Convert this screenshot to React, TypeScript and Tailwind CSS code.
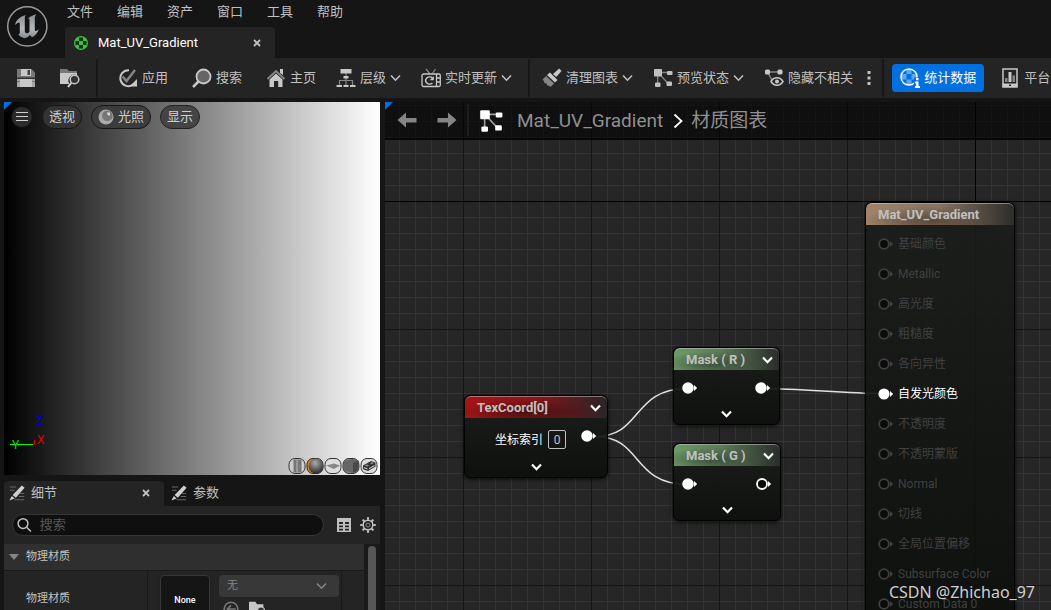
import { useState, type ReactNode } from "react";

const menus = ["文件", "编辑", "资产", "窗口", "工具", "帮助"];

const materialPins = [
  { name: "基础颜色" },
  { name: "Metallic" },
  { name: "高光度" },
  { name: "粗糙度" },
  { name: "各向异性" },
  { name: "自发光颜色", linked: true },
  { name: "不透明度" },
  { name: "不透明蒙版" },
  { name: "Normal" },
  { name: "切线" },
  { name: "全局位置偏移" },
  { name: "Subsurface Color" },
  { name: "Custom Data 0" },
];

function Chevron({ className = "w-[11px]", width = 1.6 }: { className?: string; width?: number }) {
  return (
    <svg viewBox="0 0 11 8" className={`shrink-0 ${className}`} fill="none" stroke="currentColor" strokeWidth={width}>
      <path d="M1 1.5 5.5 6.2 10 1.5" />
    </svg>
  );
}

function CloseIcon() {
  return (
    <svg viewBox="0 0 8 8" className="size-2" fill="none" stroke="currentColor" strokeWidth="1.8">
      <path d="M1 1l6 6M7 1L1 7" />
    </svg>
  );
}

function Icon({ children, className = "size-5" }: { children: ReactNode; className?: string }) {
  return (
    <svg viewBox="0 0 20 20" className={`shrink-0 ${className}`} fill="none">
      {children}
    </svg>
  );
}

function UnrealLogo() {
  return (
    <svg viewBox="6 5 42 42" className="size-[42px]" fill="none">
      <defs>
        <linearGradient id="metal" x1="0" y1="0" x2="0" y2="1">
          <stop offset="0" stopColor="#8b8f92" />
          <stop offset="0.6" stopColor="#b4b8ba" />
          <stop offset="1" stopColor="#85898c" />
        </linearGradient>
      </defs>
      <circle cx="27.300" cy="26.300" r="19.600" fill="#131313" stroke="#9a9a9a" strokeWidth="1.500" />
      <path
        d="M15 25 C16 20 20 16.500 25.800 15 C25 16 24.800 17 24.800 18.500 V31 C24.800 32.500 26 33.300 27 33.300 C28 33.300 29 32.500 29.500 31.500 V20 C29.500 18.700 28.800 18.500 27.600 18.900 C30 16.500 33 15 36.500 14.300 C35.200 15.800 34.800 17 34.800 19 V29.500 C34.800 31.600 36.300 31.500 38.800 29.300 C37.500 33 35 36 32 37.300 L29.800 35 C28.500 36.800 26.800 38 24.500 38.200 C21.500 37.500 19.500 36 18.300 34.500 C19.500 34 19.800 33.500 19.800 32 V23.700 C19.800 21.800 18.200 22 15 25 Z"
        fill="url(#metal)"
      />
    </svg>
  );
}

function MaterialIcon() {
  return (
    <svg viewBox="0 0 14 14" className="size-[14px]">
      <clipPath id="ball">
        <circle cx="7" cy="7" r="7" />
      </clipPath>
      <g clipPath="url(#ball)">
        <rect width="14" height="14" fill="#3fbf3f" />
        <path d="M5 1.500h4v3.500H5zM1.500 5H5v4H1.500zM9 5h3.500v4H9zM5 9h4v3.500H5z" fill="#12301a" />
        <path d="M5 5h4v4H5z" fill="#3fbf3f" />
      </g>
    </svg>
  );
}

const SaveIcon = () => (
  <Icon>
    <path d="M1 1h14.500L19 4.500V19H1z" fill="#777" />
    <path d="M5 1h10v7H5zM4 11h12v8H4z" fill="#c8c8c8" />
    <path d="M11.500 2h2.500v5h-2.500z" fill="#444" />
    <path d="M1 9.500h18V11H1z" fill="#333" />
    <path d="M1 11h18v2H1zM1 14h18v5H1z" fill="#c8c8c8" fillOpacity="0.600" />
  </Icon>
);

const BrowseIcon = () => (
  <Icon>
    <path d="M0 2V1h7l2 2h8v3H0z" fill="#777" />
    <path d="M0 5h17v2.200A6 6 0 0 0 9.500 16H0z" fill="#c8c8c8" />
    <circle cx="14.500" cy="11.500" r="4.300" fill="#333" stroke="#c8c8c8" strokeWidth="1.500" />
    <path d="M11.500 14.700 8 19" stroke="#c8c8c8" strokeWidth="2" />
  </Icon>
);

const ApplyIcon = () => (
  <Icon>
    <path d="M11 2.200A8 8 0 1 0 15.500 16.300" stroke="#c8c8c8" strokeWidth="2" />
    <path d="M19 11v7.500h-7.500z" fill="#c8c8c8" />
    <path d="M4.500 8.500l4 4.500L17 2" stroke="#858585" strokeWidth="2.500" />
  </Icon>
);

const FindIcon = () => (
  <Icon>
    <circle cx="11.500" cy="8.500" r="7" fill="#666" stroke="#c8c8c8" strokeWidth="1.800" />
    <path d="M6.500 13.500 1 19" stroke="#c8c8c8" strokeWidth="2.500" />
  </Icon>
);

const HomeIcon = () => (
  <Icon>
    <path d="M14 1h3v6l-3-2z" fill="#c8c8c8" />
    <path d="M1.500 11 10 3l8.500 8" stroke="#858585" strokeWidth="2" />
    <path d="M3.500 11.500 10 5.500l6.500 6V19h-4.300v-6H8v6H3.500z" fill="#c8c8c8" />
  </Icon>
);

const HierarchyIcon = () => (
  <Icon>
    <path d="M10 5v12M3.500 17v-4.500h13V17" stroke="#858585" strokeWidth="1.200" />
    <path d="M4.500 1h11v4.500h-11zM7.500 8h5v2.500h-5zM.5 17H6v2H.5zM7.500 17h5v2h-5zM14 17h5.500v2H14z" fill="#c8c8c8" />
  </Icon>
);

const LiveIcon = () => (
  <Icon>
    <path d="M5 1l4 5M14.500 1 11 6" stroke="#858585" strokeWidth="1.300" />
    <rect x="1" y="6" width="18.300" height="12.500" rx="1.500" stroke="#c8c8c8" strokeWidth="1.300" />
    <path d="M15.500 6v12.500M15.500 10h4M15.500 14h4" stroke="#c8c8c8" strokeWidth="1.300" />
    <path d="M11.500 10A4 3.600 0 1 0 11.500 15" stroke="#c8c8c8" strokeWidth="1.500" />
    <path d="M12.800 8v4.200H8.700z" fill="#c8c8c8" />
  </Icon>
);

const CleanIcon = () => (
  <Icon>
    <path d="M17.200.6 19.500 3l-5.300 6-3.200-3z" fill="#c8c8c8" />
    <path d="M8 4.500 15.500 12l-2.500 2.500L5 7z" fill="#c8c8c8" />
    <path d="M4.200 8 12 15.500 8.500 19 7 17.500 5.700 18 4.500 15.500 2.500 15.200 2 13 .5 11.500z" fill="#858585" />
  </Icon>
);

const GraphIcon = ({ size }: { size?: string }) => (
  <Icon className={size}>
    <path d="M5 4.500h12M4.700 4v12M5 4.500l11 12" stroke="currentColor" strokeOpacity="0.600" strokeWidth="1.300" />
    <g fill="currentColor">
      <rect x="1" y="1" width="8" height="7.500" rx="1" />
      <rect x="14" y="3" width="5.500" height="4" rx="1" />
      <rect x="2" y="14.500" width="5.500" height="4.500" rx="1" />
      <rect x="13.500" y="13.500" width="5.500" height="4.500" rx="1" />
    </g>
  </Icon>
);

const HideIcon = () => (
  <Icon>
    <path d="M3 4h12M4 5l4 7" stroke="#858585" strokeWidth="1.500" />
    <rect x="1" y="1.500" width="5" height="5" rx="1.500" fill="#c8c8c8" />
    <rect x="13.500" y="1.500" width="5" height="5" rx="1.500" fill="#c8c8c8" />
    <path d="M7 13.500c3-5 9-5 12 0-3 5-9 5-12 0Z" stroke="#c8c8c8" strokeWidth="1.500" />
    <circle cx="13" cy="13.500" r="2" fill="#c8c8c8" />
  </Icon>
);

const StatsIcon = () => (
  <Icon>
    <clipPath id="stats">
      <circle cx="9" cy="9" r="7.500" />
    </clipPath>
    <path d="M6.500 1h5v5h-5zM1 6h5.500v5.500H1zM11.500 6H18v5.500h-6.500zM6.500 11.500h5V18h-5z" fill="#8abcf5" fillOpacity="0.700" clipPath="url(#stats)" />
    <circle cx="9" cy="9" r="8" stroke="#fff" strokeWidth="1.500" />
    <path d="M14 9.500h6V20h-6z" fill="#0070e0" />
    <path d="M16 10h2.500v2.200H16zM15 13.500h3.500V18H20v2h-5v-2h1.200v-2.500H15z" fill="#fff" />
  </Icon>
);

const PlatformIcon = () => (
  <Icon>
    <path d="M3 1h14v18H3z" stroke="#c8c8c8" strokeWidth="1.500" />
    <path d="M2.500 15.500h15V19h-15z" fill="#c8c8c8" />
    <path d="M9 16.500h2V18H9z" fill="#242424" />
    <path d="M5 10h2.500v4H5zM12.500 7.500H15V14h-2.500z" fill="#858585" />
    <path d="M8.500 4h3v10h-3z" fill="#c8c8c8" />
  </Icon>
);

const EditIcon = () => (
  <Icon className="size-4">
    <path d="M1 2.500h8M1 6.500h6M14 10.500h5M12 14.500h7M7 18.500h12" stroke="#666" strokeWidth="1.300" />
    <path d="M16 .5 19.500 3.500 8.500 16 4.500 12.500z" fill="#d0d0d0" />
    <path d="M3.500 13.700 7 17 .5 19.500z" fill="#d0d0d0" />
  </Icon>
);

function ToolButton({ icon, label, menu }: { icon: ReactNode; label: string; menu?: boolean }) {
  return (
    <button type="button" className="flex shrink-0 items-center gap-1 whitespace-nowrap hover:text-white">
      {icon}
      <span>{label}</span>
      {menu && <Chevron />}
    </button>
  );
}

function Divider() {
  return <div className="h-[38px] w-0.5 shrink-0 bg-[#181818]" />;
}

function Toolbar() {
  return (
    <div className="flex h-10 shrink-0 items-center overflow-hidden bg-[#242424] text-[13px] text-[#c0c0c0]">
      <div className="flex shrink-0 items-center gap-6 px-4">
        <button type="button" aria-label="保存"><SaveIcon /></button>
        <button type="button" aria-label="浏览"><BrowseIcon /></button>
      </div>
      <Divider />
      <div className="flex shrink-0 items-center gap-5 pr-4 pl-5">
        <div className="flex items-center gap-6">
          <ToolButton icon={<ApplyIcon />} label="应用" />
          <ToolButton icon={<FindIcon />} label="搜索" />
          <ToolButton icon={<HomeIcon />} label="主页" />
        </div>
        <ToolButton icon={<HierarchyIcon />} label="层级" menu />
        <ToolButton icon={<LiveIcon />} label="实时更新" menu />
      </div>
      <Divider />
      <div className="flex shrink-0 items-center gap-5 pr-[9px] pl-3">
        <ToolButton icon={<CleanIcon />} label="清理图表" menu />
        <ToolButton icon={<GraphIcon />} label="预览状态" menu />
        <div className="flex items-center gap-3">
          <ToolButton icon={<HideIcon />} label="隐藏不相关" />
          <button type="button" aria-label="更多" className="px-0.5">
            <svg viewBox="0 0 4 16" className="h-4 w-1" fill="currentColor">
              <path d="M.5 1h3v3h-3zM.5 6.500h3v3h-3zM.5 12h3v3h-3z" />
            </svg>
          </button>
        </div>
      </div>
      <Divider />
      <div className="flex shrink-0 items-center gap-4 pl-2">
        <button type="button" className="flex h-7 shrink-0 items-center gap-1 rounded bg-[#0070e0] px-2 whitespace-nowrap text-white">
          <StatsIcon />
          <span>统计数据</span>
        </button>
        <ToolButton icon={<PlatformIcon />} label="平台" />
      </div>
    </div>
  );
}

function ShapePicker() {
  return (
    <div className="flex">
      <button type="button" aria-label="圆柱体">
        <svg viewBox="0 0 18 18" className="size-[18px]">
          <rect x="1" y="1.500" width="16" height="15" rx="6" fill="#ccc" stroke="#333" />
          <path d="M5.500 2.500h8v13h-8z" fill="#777" />
          <path d="M8 2.500h2v13H8z" fill="#999" />
        </svg>
      </button>
      <button type="button" aria-label="球体">
        <svg viewBox="0 0 18 18" className="size-[18px]">
          <defs>
            <radialGradient id="sphere" cx="0.450" cy="0.300" r="0.700">
              <stop offset="0" stopColor="#aaa" />
              <stop offset="1" stopColor="#2c2c2c" />
            </radialGradient>
          </defs>
          <rect x="1" y="1.500" width="16" height="15" rx="6" fill="#e0861a" stroke="#222" />
          <circle cx="10" cy="9" r="7.500" fill="url(#sphere)" />
        </svg>
      </button>
      <button type="button" aria-label="平面">
        <svg viewBox="0 0 18 18" className="size-[18px]">
          <rect x="1" y="1.500" width="16" height="15" rx="6" fill="#ddd" stroke="#333" />
          <path d="M2 8.500 10 6.500l6 2-6 3.500z" fill="#888" />
        </svg>
      </button>
      <button type="button" aria-label="立方体">
        <svg viewBox="0 0 18 18" className="size-[18px]">
          <rect x="1" y="1.500" width="16" height="15" rx="6" fill="#888" stroke="#333" />
          <path d="M2 4.500 10 2l6.500 1.500V13L11 16l-9-2.500z" fill="#666" />
          <path d="M11 6l5.500-2.500V13L11 16z" fill="#484848" />
        </svg>
      </button>
      <button type="button" aria-label="自定义">
        <svg viewBox="0 0 18 18" className="size-[18px]">
          <rect x="1" y="1.500" width="16" height="15" rx="6" fill="#ddd" stroke="#333" />
          <path d="M3 8.500 11 4l4.500 1.500v4L8 14l-5-1.800z" fill="#333" />
          <path d="M4 10l3.500 1.300v1.300L4 11.300zM9 11l5.500-3v1.300L9 12.300z" fill="#bbb" />
          <path d="M5 8.700l2-1.200 2 .8-2 1.200zM10 6.300l2-1 2 .8-2 1z" fill="#999" />
        </svg>
      </button>
    </div>
  );
}

function Viewport() {
  return (
    <section className="relative flex h-[373px] shrink-0 flex-col justify-between bg-linear-to-r/srgb from-black to-white">
      <div className="absolute top-0 left-0 size-2 bg-[#0070e0] [clip-path:polygon(0_0,100%_0,0_100%)]" />
      <div className="flex items-center gap-[9px] px-[7px] pt-[3px] text-[13px] text-[#d0d0d0]">
        <button type="button" aria-label="视口选项" className="flex size-[22px] items-center justify-center rounded-full border border-[#111] bg-[#2c2c2c]">
          <svg viewBox="0 0 12 10" className="h-[10px] w-3" stroke="currentColor" strokeWidth="1">
            <path d="M0 .5h12M0 4.500h12M0 8.500h12" />
          </svg>
        </button>
        <button type="button" className="flex h-6 items-center rounded-full border border-[#161616] bg-[#333] px-1.5">透视</button>
        <button type="button" className="flex h-6 items-center gap-1 rounded-full border border-[#161616] bg-[#3c3c3c] px-1.5">
          <svg viewBox="0 0 16 16" className="size-4">
            <circle cx="8" cy="8" r="7.500" fill="#aaa" />
            <circle cx="9.300" cy="6.700" r="5.300" fill="#777" />
            <path d="M9 3.500h3v3H10z" fill="#ddd" />
          </svg>
          光照
        </button>
        <button type="button" className="flex h-6 items-center rounded-full border border-[#222] bg-[#444] px-1.5">显示</button>
      </div>
      <div className="flex items-end justify-between pr-0.5 pl-1.5">
        <svg viewBox="0 0 40 60" className="h-[60px] w-10 font-[Roboto] text-[12px]">
          <path d="M23.500 6v24" stroke="#0000c8" />
          <path d="M0 29.500h23" stroke="#00ff00" />
          <path d="M24.500 25v5" stroke="#e00000" />
          <text x="26" y="10" fill="#0000c8">Z</text>
          <text x="27" y="29" fill="#e00000">X</text>
          <text x="2" y="34" fill="#00e000">Y</text>
        </svg>
        <ShapePicker />
      </div>
    </section>
  );
}

function Details() {
  const [query, setQuery] = useState("");

  return (
    <section className="flex min-h-0 flex-1 flex-col overflow-hidden pt-1.5">
      <div className="flex h-[25px] shrink-0 text-[13px] text-[#c0c0c0]">
        <div className="flex w-40 items-center gap-1.5 rounded-t bg-[#242424] pr-3.5 pb-0.5 pl-[5px]">
          <EditIcon />
          <span className="flex-1">细节</span>
          <button type="button" aria-label="关闭细节"><CloseIcon /></button>
        </div>
        <button type="button" className="flex items-center gap-1.5 px-[7px] pb-0.5">
          <EditIcon />
          参数
        </button>
      </div>
      <div className="flex h-[38px] shrink-0 items-center gap-3 bg-[#242424] pr-1 pl-2">
        <label className="flex h-[22px] flex-1 items-center gap-2 rounded-full border border-[#363636] bg-[#0f0f0f] px-1 text-[#c0c0c0]">
          <svg viewBox="0 0 16 16" className="size-4" fill="none" stroke="currentColor" strokeWidth="1.600">
            <circle cx="6.500" cy="6.500" r="5.300" />
            <path d="M10.500 10.500 15 15" />
          </svg>
          <input
            aria-label="搜索"
            placeholder="搜索"
            value={query}
            onChange={(e) => setQuery(e.target.value)}
            className="w-full bg-transparent text-[13px] outline-none placeholder:text-[#575757]"
          />
        </label>
        <div className="flex items-center gap-2 text-[#c0c0c0]">
          <button type="button" aria-label="表格视图">
            <svg viewBox="0 0 16 16" className="size-4">
              <path d="M1 1h14v14H1z" fill="currentColor" />
              <path d="M3 5h4v2H3zM9 5h4v2H9zM3 8.500h4v1.700H3zM9 8.500h4v1.700H9zM3 11.800h4v1.600H3zM9 11.800h4v1.600H9z" fill="#242424" />
            </svg>
          </button>
          <button type="button" aria-label="设置">
            <svg viewBox="0 0 16 16" className="size-4" fill="none" stroke="currentColor">
              <circle cx="8" cy="8" r="4.800" strokeWidth="1.500" />
              <circle cx="8" cy="8" r="2" strokeWidth="1" stroke="#858585" />
              <path d="M8 .3v2.500M8 13.200v2.500M.3 8h2.500M13.200 8h2.500M2.600 2.600l1.700 1.700M11.700 11.700l1.700 1.700M2.600 13.400l1.700-1.700M11.700 4.300l1.700-1.700" strokeWidth="2" />
            </svg>
          </button>
        </div>
      </div>
      <div className="flex min-h-0 flex-1 bg-[#1a1a1a] text-[11px] text-[#c0c0c0]">
        <div className="min-w-0 flex-1">
          <button type="button" className="flex h-[26px] w-full items-center gap-1.5 bg-[#2f2f2f] px-1">
            <svg viewBox="0 0 12 8" className="h-2 w-3" fill="#858585">
              <path d="M1 1h10L6 7z" />
            </svg>
            物理材质
          </button>
          <div className="mt-px flex h-14 gap-px">
            <div className="flex w-[143px] items-center bg-[#242424] pl-[22px]">物理材质</div>
            <div className="flex flex-1 gap-[9px] bg-[#242424] pt-1 pl-3">
              <button type="button" className="flex h-[52px] w-[50px] items-center justify-center rounded border border-[#363636] bg-[#151515] text-[9px] font-medium text-white shadow">
                None
              </button>
              <div className="flex w-[120px] flex-col gap-1">
                <div className="relative text-[#858585]">
                  <select aria-label="物理材质" className="h-[22px] w-full appearance-none rounded bg-[#383838] px-2 text-[11px] outline-none">
                    <option>无</option>
                  </select>
                  <Chevron className="pointer-events-none absolute top-[7px] right-3 w-[11px]" />
                </div>
                <div className="flex gap-2.5 pl-1">
                  <button type="button" aria-label="使用选中资产">
                    <Icon className="size-4">
                      <circle cx="10" cy="10" r="8.500" stroke="#777" strokeWidth="2" />
                      <path d="M16 10H6M10 5.500 5.500 10l4.500 4.500" stroke="#777" strokeWidth="2" />
                    </Icon>
                  </button>
                  <button type="button" aria-label="浏览到资产">
                    <Icon className="size-4">
                      <path d="M0 1h8l2 3h8v14H0z" fill="#c8c8c8" />
                      <circle cx="15" cy="12" r="4.500" fill="#333" stroke="#c8c8c8" strokeWidth="1.500" />
                    </Icon>
                  </button>
                </div>
              </div>
            </div>
            <div className="w-[22px] bg-[#242424]" />
          </div>
        </div>
        <div className="flex w-4 px-1 pt-0.5">
          <div className="h-40 w-2 rounded-full bg-[#575757]" />
        </div>
      </div>
    </section>
  );
}

function Pin({ linked, small, label }: { linked?: boolean; small?: boolean; label: string }) {
  return (
    <svg viewBox="0 0 16 12" role="img" aria-label={label} className="h-3 w-4 shrink-0" stroke="currentColor">
      <circle cx="6" cy="6" r={small ? 4.8 : 5} fill={linked ? "currentColor" : "#0b0b0b"} strokeWidth={linked ? 1.5 : 1.8} />
      <path d="M12 3 15.200 6 12 9z" fill="currentColor" stroke="none" />
    </svg>
  );
}

const nodeBox = "absolute overflow-hidden rounded-md border border-black bg-linear-to-b from-[#1b1d1b]/90 to-[#0d0f0d]/95 shadow-[0_1px_4px_rgba(0,0,0,0.8)]";
const nodeHead = "flex h-[22px] items-center justify-between rounded-t-md border-t border-white/40 pr-1.5 pl-3 text-[13px] font-bold whitespace-nowrap text-[#c0c0c0]";

function MaskNode({ channel, className, linked }: { channel: string; className: string; linked?: boolean }) {
  return (
    <div className={`${nodeBox} ${className}`}>
      <div className={`${nodeHead} bg-[radial-gradient(ellipse_at_40%_70%,#3d523b_0%,transparent_60%),linear-gradient(to_right,#6f9a6a,#5c7a58_45%,#2a2c2a)]`}>
        {`Mask ( ${channel} )`}
        <button type="button" aria-label={`折叠 Mask ${channel}`} className="text-white"><Chevron width={2.2} /></button>
      </div>
      <div className="flex justify-between px-2 pt-3 text-white">
        <Pin linked label="输入" />
        <Pin linked={linked} label="输出" />
      </div>
      <div className="flex justify-center pt-4 text-white">
        <button type="button" aria-label={`展开 Mask ${channel}`}><Chevron width={2.2} /></button>
      </div>
    </div>
  );
}

function Graph() {
  const [index, setIndex] = useState("0");

  return (
    <main className="relative min-w-0 flex-1 overflow-hidden bg-[#262626]">
      <svg className="absolute inset-0 size-full" fill="none">
        <defs>
          <pattern id="minor" x="14" y="3" width="16" height="16" patternUnits="userSpaceOnUse">
            <path d="M0 .5h16M.5 0v16" stroke="#343434" />
          </pattern>
          <pattern id="major" x="78" y="99" width="128" height="128" patternUnits="userSpaceOnUse">
            <path d="M0 .5h128M.5 0v128" stroke="#151515" />
          </pattern>
        </defs>
        <rect width="100%" height="100%" fill="url(#minor)" />
        <rect width="100%" height="100%" fill="url(#major)" />
        <path d="M0 99.500h2000M590.500 0v2000" stroke="#000" />
        <g stroke="#e0e0e0" strokeWidth="1.500">
          <path d="M210 334.500C258 334.500 246 286.500 303 286.500" />
          <path d="M210 334.500C258 334.500 246 382.500 303 382.500" />
          <path d="M376 286.500C420 286.500 455 291.500 498 291.500" />
        </g>
      </svg>

      <div className="relative flex h-[38px] items-center border-b-2 border-black/50 bg-black/60 text-[#909090]">
        <div className="absolute top-0 left-0 size-2 bg-[#0070e0] [clip-path:polygon(0_0,100%_0,0_100%)]" />
        <div className="flex items-center gap-5 pr-2.5 pl-3">
          <button type="button" aria-label="后退">
            <Icon>
              <path d="M.5 10 9 2.500V8h10.500v4.500H9v5z" fill="#858585" />
            </Icon>
          </button>
          <button type="button" aria-label="前进">
            <Icon>
              <path d="M19.500 10 11 2.500V8H.5v4.500H11v5z" fill="#858585" />
            </Icon>
          </button>
        </div>
        <div className="h-8 w-0.5 bg-[#1c1c1c]" />
        <nav className="flex items-center pt-0.5 pl-2.5 text-[19px] whitespace-nowrap">
          <span className="pr-3.5 text-white"><GraphIcon size="size-6" /></span>
          <a href="#graph">Mat_UV_Gradient</a>
          <svg viewBox="0 0 10 16" className="mr-2 ml-2.5 h-4 w-[10px] text-white" fill="none" stroke="currentColor" strokeWidth="1.800">
            <path d="M1.500 1.500 8.500 8l-7 6.500" />
          </svg>
          <span>材质图表</span>
        </nav>
      </div>

      <div className={`${nodeBox} top-[293px] left-[79px] h-[83px] w-36`}>
        <div className={`${nodeHead} bg-[radial-gradient(ellipse_at_45%_70%,#4a1011_0%,transparent_60%),linear-gradient(to_right,#a31417,#8c1518_45%,#2a2526)]`}>
          TexCoord[0]
          <button type="button" aria-label="折叠 TexCoord" className="text-white"><Chevron width={2.2} /></button>
        </div>
        <div className="flex items-start justify-end gap-[15px] pt-3 pr-2.5 text-white">
          <label className="flex items-center gap-[5px] text-[12px]">
            坐标索引
            <input
              value={index}
              onChange={(e) => setIndex(e.target.value)}
              className="h-[19px] w-[18px] rounded-xs border border-[#c0c0c0] bg-transparent text-center text-[12px] text-[#c0c0c0] outline-none"
            />
          </label>
          <Pin linked label="输出" />
        </div>
        <div className="flex justify-center pt-3.5 text-white">
          <button type="button" aria-label="展开 TexCoord"><Chevron width={2.2} /></button>
        </div>
      </div>

      <MaskNode channel="R" linked className="top-[245px] left-[288px] h-[78px] w-[107px]" />
      <MaskNode channel="G" className="top-[341px] left-[288px] h-[78px] w-[108px]" />

      <div className={`${nodeBox} top-[100px] left-[480px] w-[150px] pb-4`}>
        <div className={`${nodeHead} bg-[radial-gradient(ellipse_at_45%_80%,#5a493b_0%,transparent_60%),linear-gradient(to_right,#a08468,#857262_50%,#2c2c2a)]`}>Mat_UV_Gradient</div>
        <ul className="pt-1 text-[12px] whitespace-nowrap">
          {materialPins.map((p) => (
            <li key={p.name} className={`flex h-[30px] items-center gap-1 pl-3 ${p.linked ? "text-white" : "text-[#404040]"}`}>
              <Pin linked={p.linked} small label={p.name} />
              {p.name}
            </li>
          ))}
        </ul>
      </div>

      <div className="absolute right-4 bottom-1.5 font-['Noto_Sans',sans-serif] text-[16px] leading-6 text-[#cfcfcf]">CSDN @Zhichao_97</div>
    </main>
  );
}

export default function App() {
  return (
    <div className="flex h-screen flex-col overflow-hidden bg-[#151515] font-[Roboto,'Noto_Sans_CJK_SC',sans-serif] leading-normal select-none">
      <header className="flex shrink-0 gap-[17px] pl-1.5">
        <div className="pt-[5px]">
          <UnrealLogo />
        </div>
        <div>
          <nav className="flex h-[27px] gap-6 pt-0.5 pl-0.5 text-[13px] text-[#c0c0c0]">
            {menus.map((m) => (
              <button key={m} type="button" className="flex h-5 items-center">{m}</button>
            ))}
          </nav>
          <div className="flex h-[31px] w-[210px] items-center gap-2.5 rounded-t bg-[#242424] pr-3.5 pl-[9px] text-[13px] text-white">
            <MaterialIcon />
            <span className="flex-1">Mat_UV_Gradient</span>
            <button type="button" aria-label="关闭" className="text-[#c0c0c0]"><CloseIcon /></button>
          </div>
        </div>
      </header>
      <Toolbar />
      <div className="flex min-h-0 flex-1 pt-1">
        <aside className="mr-[5px] ml-1 flex w-[376px] shrink-0 flex-col">
          <Viewport />
          <Details />
        </aside>
        <Graph />
      </div>
    </div>
  );
}
